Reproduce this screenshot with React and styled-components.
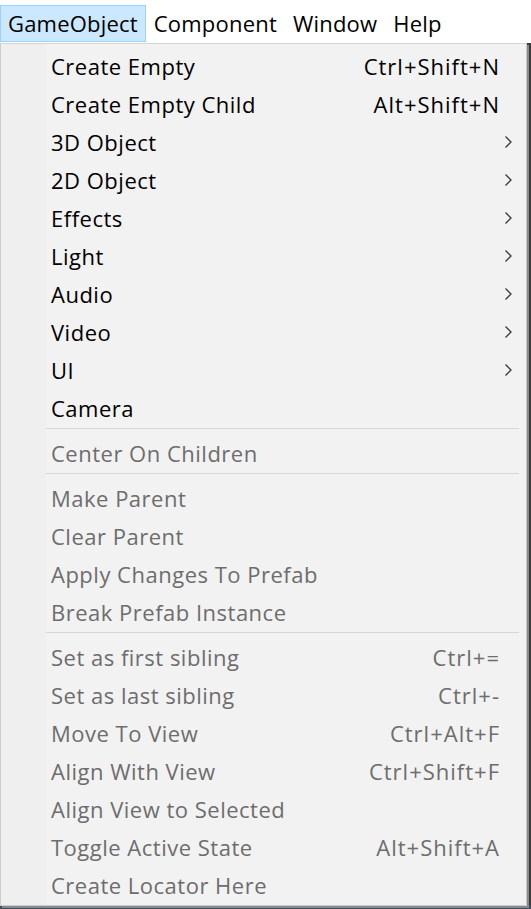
import React from "react";
import styled, { createGlobalStyle } from "styled-components";

const GlobalStyle = createGlobalStyle`
  html, body {
    margin: 0;
    padding: 0;
    background: #3b3b3b;
    font-family: "Open Sans", "Noto Sans", sans-serif;
  }
`;

const MENUS = ["GameObject", "Component", "Window", "Help"];

const ITEMS = [
  [
    { label: "Create Empty", shortcut: "Ctrl+Shift+N" },
    { label: "Create Empty Child", shortcut: "Alt+Shift+N" },
    { label: "3D Object", sub: true },
    { label: "2D Object", sub: true },
    { label: "Effects", sub: true },
    { label: "Light", sub: true },
    { label: "Audio", sub: true },
    { label: "Video", sub: true },
    { label: "UI", sub: true },
    { label: "Camera" },
  ],
  [{ label: "Center On Children", disabled: true }],
  [
    { label: "Make Parent", disabled: true },
    { label: "Clear Parent", disabled: true },
    { label: "Apply Changes To Prefab", disabled: true },
    { label: "Break Prefab Instance", disabled: true },
  ],
  [
    { label: "Set as first sibling", shortcut: "Ctrl+=", disabled: true },
    { label: "Set as last sibling", shortcut: "Ctrl+-", disabled: true },
    { label: "Move To View", shortcut: "Ctrl+Alt+F", disabled: true },
    { label: "Align With View", shortcut: "Ctrl+Shift+F", disabled: true },
    { label: "Align View to Selected", disabled: true },
    { label: "Toggle Active State", shortcut: "Alt+Shift+A", disabled: true },
    { label: "Create Locator Here", disabled: true },
  ],
];

const Chevron = () => (
  <svg width="8" height="14" viewBox="0 0 8 14">
    <polyline
      points="1.5,1.5 7,7 1.5,12.5"
      fill="none"
      stroke="#3a3a3a"
      strokeWidth="1.3"
    />
  </svg>
);

const App = () => {
  return (
    <Wrapper>
      <GlobalStyle />
      <MenuBar>
        {MENUS.map((m, i) => (
          <MenuTitle key={m} active={i === 0}>
            {m}
          </MenuTitle>
        ))}
      </MenuBar>
      <Dropdown>
        {ITEMS.map((group, gi) => (
          <React.Fragment key={gi}>
            {gi > 0 && <Separator />}
            {group.map((item) => (
              <Row key={item.label} disabled={item.disabled}>
                <Label>{item.label}</Label>
                <Shortcut>{item.shortcut}</Shortcut>
                <Arrow>{item.sub && <Chevron />}</Arrow>
              </Row>
            ))}
          </React.Fragment>
        ))}
      </Dropdown>
    </Wrapper>
  );
};

const Wrapper = styled.div`
  width: 531px;
  height: 909px;
  overflow: hidden;
  background: linear-gradient(to bottom, #3b3b3b 0, #3b3b3b 905px, #3f4d5e 905px);
`;

const MenuBar = styled.div`
  height: 43px;
  background: #ffffff;
  display: flex;
  align-items: flex-end;
  padding-top: 5px;
  box-sizing: border-box;
`;

const MenuTitle = styled.div`
  height: 37px;
  margin-bottom: 1px;
  padding: 0 7px 1px 7px;
  display: flex;
  align-items: center;
  font-size: 22px;
  letter-spacing: 0.2px;
  color: #000;
  border: 1px solid ${(p) => (p.active ? "#99d1ff" : "transparent")};
  background: ${(p) => (p.active ? "#cce8ff" : "transparent")};
  box-sizing: border-box;
`;

const Dropdown = styled.div`
  width: 527px;
  box-sizing: border-box;
  padding: 3px 0 1px 0;
  border: 1px solid #cccccc;
  border-top-color: #d4d4d4;
  background: linear-gradient(to right, #efefef 0, #efefef 45px, #f2f2f2 45px);
  box-shadow: 2px 2px 0 #8a8a8a;
`;

const Row = styled.div`
  height: 38px;
  display: grid;
  grid-template-columns: 1fr auto 28px;
  align-items: center;
  padding-left: 50px;
  font-size: 22px;
  letter-spacing: 0.5px;
  color: ${(p) => (p.disabled ? "#6d6d6d" : "#000000")};
  white-space: nowrap;
`;

const Label = styled.span`
  line-height: 38px;
`;

const Shortcut = styled.span`
  line-height: 38px;
  letter-spacing: 1px;
  margin-right: -2px;
`;

const Arrow = styled.span`
  display: flex;
  align-items: center;
  padding-left: 6px;
`;

const Separator = styled.div`
  margin-top: 1px;
  height: 6px;
  margin-left: 45px;
  margin-right: 7px;
  box-sizing: border-box;
  border-top: 1px solid #d7d7d7;
`;

export default App;
